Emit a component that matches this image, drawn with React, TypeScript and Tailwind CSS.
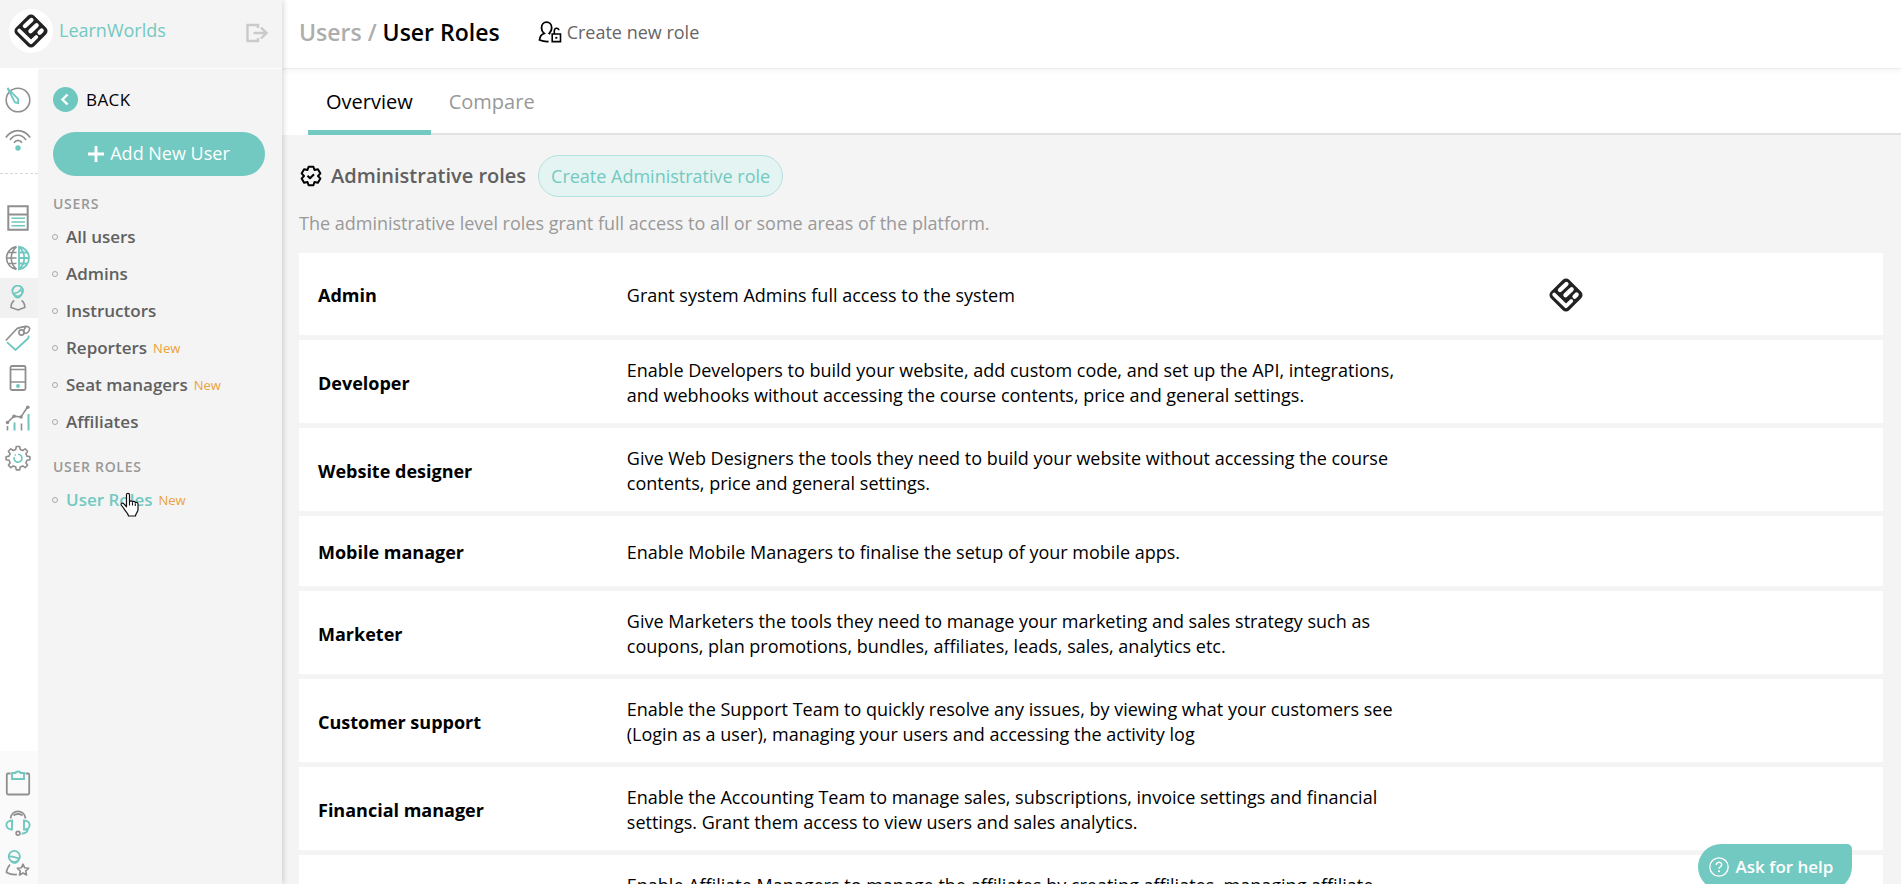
import React from 'react';

const G = '#8f8f8f';
const T = '#6fc8c0';

function Logo({ className }: { className: string }) {
  return (
    <svg viewBox="0 0 36 36" className={className} fill="none" aria-hidden="true">
      <rect x="5" y="5" width="26" height="26" rx="4.500" transform="rotate(45 18 18)" fill="#222" />
      <g stroke="#fff" strokeLinecap="round" strokeLinejoin="round">
        <path d="M12 13 18.400 7" strokeWidth="4.400" />
        <path d="M17.500 18.200 23.600 12.300" strokeWidth="4.400" />
        <path d="M26.600 19.600 28.600 17.600" strokeWidth="4.400" />
        <path d="M6.200 17.600 18 29.200 23.300 24" strokeWidth="3.800" />
      </g>
    </svg>
  );
}

function RailSvg({ children }: { children: React.ReactNode }) {
  return (
    <svg viewBox="0 0 26 26" className="size-[26px]" fill="none" stroke={G} strokeWidth="1.6" aria-hidden="true">
      {children}
    </svg>
  );
}

const star = 'M18 14.200l1.700 3.600 3.900.5-2.900 2.700.8 4-3.500-2-3.500 2 .8-4-2.900-2.700 3.900-.5z';

const railTop = [
  {
    label: 'Dashboard',
    icon: (
      <RailSvg>
        <circle cx="13" cy="13" r="11.800" />
        <path d="M2.500 1 13.200 12.200v4L10 15.500z" stroke={T} strokeWidth="1.800" fill="#fff" />
      </RailSvg>
    ),
  },
  {
    label: 'Live',
    icon: (
      <RailSvg>
        <path d="M.8 10.500C7.500 1.300 18.500 1.300 25.200 10.500M5 13c4.500-6.300 11.500-6.300 16 0M9 15.800c2.200-3.200 5.800-3.200 8 0" />
        <circle cx="13" cy="21" r="2.700" fill={T} stroke="none" />
      </RailSvg>
    ),
  },
];

const railMain = [
  {
    label: 'Courses',
    icon: (
      <RailSvg>
        <path d="M3.300 1.300h19.400v23.400H3.300zM3.300 9.500h19.400" strokeWidth="2" />
        <path d="M6.500 13.300h13.500M6.500 17h13.500M6.500 20.700h13.500" stroke={T} />
      </RailSvg>
    ),
  },
  {
    label: 'Website',
    icon: (
      <RailSvg>
        <path d="M11.500 1.600a11.500 11.500 0 0 0 0 22.800M11.500 1.600C4.500 8 4.500 18 11.500 24.400M1.500 13h10M3.500 7.500h8M3.500 18.500h8" />
        <path d="M14 1.600a11.500 11.500 0 0 1 0 22.800zM14 1.600c7 6.400 7 16.400 0 22.800M14 13h10.500M14 7.500h9M14 18.500h9" stroke={T} strokeWidth="1.800" />
      </RailSvg>
    ),
  },
  {
    label: 'Users',
    active: true,
    icon: (
      <RailSvg>
        <circle cx="12.700" cy="6" r="5.300" stroke={T} strokeWidth="1.800" />
        <path d="M8.500 8.500c2.500-.2 5.500-1.300 7-3.800l2 3.500M9.200 9.500c.6 1.800 2 3.200 3.500 3.200s3-1.400 3.600-3.200" stroke={T} />
        <path d="M9.200 15.500C7 17 6 20 6 22.500l7 2.500 6.800-2.500c0-2.500-1-5.500-3.200-7" />
      </RailSvg>
    ),
  },
  {
    label: 'Marketing',
    icon: (
      <RailSvg>
        <path d="M.8 15.500 12 3.600c2-1.200 5-1.600 8.500-2.200 3.800-.5 5 2 3.300 4.700-1.500 2.400-4.300 3-5 1.200-.7-1.700.6-3.600 2-5.300" />
        <circle cx="16.500" cy="7.500" r="2.600" />
        <path d="M2 17.200 10.500 25 23.500 13V10.500" stroke={T} strokeWidth="1.800" />
      </RailSvg>
    ),
  },
  {
    label: 'Mobile app',
    icon: (
      <RailSvg>
        <rect x="5.500" y="1" width="15" height="24" rx="1.500" strokeWidth="1.800" />
        <path d="M5.500 4.500h15M5.500 17h15" />
        <circle cx="13" cy="21" r="2" fill={T} stroke="none" />
      </RailSvg>
    ),
  },
  {
    label: 'Reports',
    icon: (
      <RailSvg>
        <path d="M2.500 17.500 9 11.200l7 .8 6.500-10" />
        <g fill={G} stroke="none">
          <circle cx="2.500" cy="17.500" r="1.800" />
          <circle cx="9" cy="11.200" r="1.800" />
          <circle cx="16" cy="12" r="1.800" />
          <circle cx="22.800" cy="2.200" r="1.800" />
        </g>
        <path d="M2.500 21v4.500M16.500 18.500v7" />
        <path d="M9.500 17.500v8M23.500 9v16.500" stroke={T} strokeWidth="2" />
      </RailSvg>
    ),
  },
  {
    label: 'Settings',
    icon: (
      <RailSvg>
        <path
          d="M11.300 1.500h3.400l.6 3 2.400 1 2.500-1.700 2.400 2.400-1.700 2.500 1 2.400 3 .6v3l-3 .6-1 2.400 1.700 2.500-2.400 2.400-2.500-1.700-2.400 1-.6 3h-3.400l-.6-3-2.400-1-2.500 1.700-2.400-2.400 1.700-2.500-1-2.400-3-.6v-3l3-.6 1-2.400-1.700-2.500 2.400-2.400 2.500 1.700 2.400-1z"
          strokeLinejoin="round"
        />
        <path d="M13 9.200a4 4 0 1 1-3.800 2.700M9.800 10.500a4 4 0 0 1 1-.9" stroke={T} />
      </RailSvg>
    ),
  },
];

const railBottom = [
  {
    label: 'My account',
    icon: (
      <RailSvg>
        <path d="M5.500 3.500H3A1.200 1.200 0 0 0 1.800 4.700v18.600c0 .8.5 1.200 1.200 1.200h20c.8 0 1.200-.5 1.200-1.200V4.700c0-.7-.4-1.200-1.200-1.200h-2.500" strokeWidth="1.800" />
        <path d="M7 3h3.500c0-2 5-2 5 0H19v6H7z" stroke={T} strokeWidth="1.900" />
      </RailSvg>
    ),
  },
  {
    label: 'Need help?',
    icon: (
      <RailSvg>
        <path d="M5.500 8.500c1-9.500 14-9.500 15 0M8.500 5.500c2-2 7-2 9 0" strokeWidth="1.800" />
        <path d="M7 10.500v9c-7.500 0-7.500-9 0-9zM19 10.500v9c7.500 0 7.500-9 0-9zM23 18c0 4-2.500 5.500-6.500 5.700" stroke={T} strokeWidth="1.900" />
        <circle cx="13" cy="23.300" r="1.900" />
      </RailSvg>
    ),
  },
  {
    label: 'Become a partner',
    icon: (
      <RailSvg>
        <circle cx="9.300" cy="6.500" r="5.600" stroke={T} strokeWidth="1.800" />
        <path d="M4 6.500c4-.5 6.500 1.500 10.500 2M6 10.500c1 3 5.500 3.500 7.500-.5" stroke={T} strokeWidth="1.800" />
        <path d="M5 14.500C3 17 1.500 20 1.500 22.500c3 1.500 7 2.500 10.500 2" />
        <path d={star} strokeLinejoin="round" />
      </RailSvg>
    ),
  },
];

function RailItem({ label, active, icon }: { label: string; active?: boolean; icon: React.ReactNode }) {
  return (
    <a
      href="#"
      aria-label={label}
      className={
        active
          ? 'flex h-[40px] items-center justify-center bg-[#f1f1f1] pr-[2px]'
          : 'flex h-[40px] items-center justify-center pr-[2px]'
      }
    >
      {icon}
    </a>
  );
}

const userLinks = [
  { label: 'All users' },
  { label: 'Admins' },
  { label: 'Instructors' },
  { label: 'Reporters', isNew: true },
  { label: 'Seat managers', isNew: true },
  { label: 'Affiliates' },
];

function NavItem({ label, isNew, active }: { label: string; isNew?: boolean; active?: boolean }) {
  return (
    <li className="relative flex h-[37px] items-center">
      <span className="mr-[8px] -ml-px size-[6px] rounded-full border border-[#a8a8a8]" />
      <a
        href="#"
        className={active ? 'text-[17px] font-semibold text-[#72c9c1]' : 'text-[17px] font-semibold text-[#606060]'}
      >
        {label}
      </a>
      {isNew && <span className="ml-[6px] pt-[2px] text-[13px] text-[#eba13c]">New</span>}
      {active && (
        <svg viewBox="0 0 20 26" className="absolute top-[10px] left-[67px] h-[26px] w-[20px]" aria-hidden="true">
          <path
            d="M6.500 2.800c0-2 3-2 3 0v7c.5-1.300 2.700-1.200 3 .2.700-1 2.600-.8 2.800.7.900-.8 2.700-.2 2.700 1.400v5.500c0 3-2.500 3.400-2.500 6.400h-7c-.5-3-3.500-5-4.500-7.300L1.200 13c-.5-1.700 1.600-2.600 2.700-1.200l2.600 3z"
            fill="#fff"
            stroke="#111"
            strokeWidth="1.200"
            strokeLinejoin="round"
          />
          <path d="M9.500 9.500v4M12.500 10.500v3M15.300 11.500v2.500" stroke="#111" strokeWidth="1.100" />
        </svg>
      )}
    </li>
  );
}

const roles = [
  { name: 'Admin', text: 'Grant system Admins full access to the system', logo: true },
  {
    name: 'Developer',
    text: 'Enable Developers to build your website, add custom code, and set up the API, integrations, and webhooks without accessing the course contents, price and general settings.',
  },
  {
    name: 'Website designer',
    text: 'Give Web Designers the tools they need to build your website without accessing the course contents, price and general settings.',
  },
  { name: 'Mobile manager', text: 'Enable Mobile Managers to finalise the setup of your mobile apps.' },
  {
    name: 'Marketer',
    text: 'Give Marketers the tools they need to manage your marketing and sales strategy such as coupons, plan promotions, bundles, affiliates, leads, sales, analytics etc.',
  },
  {
    name: 'Customer support',
    text: 'Enable the Support Team to quickly resolve any issues, by viewing what your customers see (Login as a user), managing your users and accessing the activity log',
  },
  {
    name: 'Financial manager',
    text: 'Enable the Accounting Team to manage sales, subscriptions, invoice settings and financial settings. Grant them access to view users and sales analytics.',
  },
  {
    name: 'Affiliate manager',
    text: 'Enable Affiliate Managers to manage the affiliates by creating affiliates, managing affiliate commissions and handling their payments.',
  },
];

export default function App() {
  return (
    <div className="flex h-screen overflow-hidden bg-[#f4f4f4] font-['Open_Sans',sans-serif] text-black">
      <aside className="relative z-10 flex w-[282px] shrink-0 flex-col bg-[#f4f4f4] shadow-[1px_0_6px_rgba(0,0,0,0.18)]">
        <div className="flex h-[69px] shrink-0 items-center border-b border-white pr-[14px] pb-[7px] pl-[9px]">
          <span className="flex size-[44px] items-center justify-center rounded-full bg-white">
            <Logo className="size-[36px]" />
          </span>
          <a href="#" className="ml-[6px] text-[18px] text-[#72c9c1]">
            LearnWorlds
          </a>
          <button type="button" aria-label="Log out" className="mt-[4px] ml-auto">
            <svg viewBox="0 0 22 20" className="h-[20px] w-[22px]" fill="none" stroke="#cacaca" strokeWidth="2.400" aria-hidden="true">
              <path d="M12 5V2H1.500v16H12v-3M7.500 10H20M15 4.500l5.500 5.500-5.500 5.500" />
            </svg>
          </button>
        </div>
        <div className="flex min-h-0 flex-1">
          <nav aria-label="Main" className="flex w-[38px] shrink-0 flex-col bg-white pt-[11px]">
            {railTop.map((i) => (
              <RailItem key={i.label} {...i} />
            ))}
            <div className="mt-[13px] mb-[24px] border-t border-dashed border-[#d8d8d8]" />
            {railMain.map((i) => (
              <RailItem key={i.label} {...i} />
            ))}
            <div className="mt-auto bg-[#fafafa] pt-[12px] pb-px">
              {railBottom.map((i) => (
                <RailItem key={i.label} {...i} />
              ))}
            </div>
          </nav>
          <nav aria-label="Users" className="flex-1 px-[15px] pt-[18px]">
            <a href="#" className="flex items-center gap-[8px] text-[17px] font-medium tracking-wide">
              <svg viewBox="0 0 25 25" className="size-[25px]" aria-hidden="true">
                <circle cx="12.500" cy="12.500" r="12.500" fill={T} />
                <path d="M14.500 7.500 9.500 12.500l5 5" fill="none" stroke="#fff" strokeWidth="2.400" />
              </svg>
              BACK
            </a>
            <button
              type="button"
              className="mt-[19px] flex h-[44px] w-[212px] items-center justify-center gap-[6px] rounded-full bg-[#72c9c1] text-[18px] text-white"
            >
              <svg viewBox="0 0 16 16" className="size-[16px]" stroke="#fff" strokeWidth="2.800" aria-hidden="true">
                <path d="M8 0v16M0 8h16" />
              </svg>
              Add New User
            </button>
            <h2 className="mt-[18px] text-[14px] leading-[20px] font-semibold tracking-wider text-[#999]">USERS</h2>
            <ul className="pt-[5px]">
              {userLinks.map((l) => (
                <NavItem key={l.label} {...l} />
              ))}
            </ul>
            <h2 className="mt-[16px] text-[14px] leading-[20px] font-semibold tracking-wider text-[#999]">USER ROLES</h2>
            <ul className="pt-[5px]">
              <NavItem label="User Roles" isNew active />
            </ul>
          </nav>
        </div>
      </aside>

      <main className="flex min-w-0 flex-1 flex-col">
        <header className="relative flex h-[69px] shrink-0 items-center border-b border-[#eee] bg-white pb-[4px] pl-[17px] shadow-[0_2px_5px_rgba(0,0,0,0.05)]">
          <h1 className="text-[23px] font-semibold">
            <a href="#" className="text-[#adadad]">
              Users
            </a>
            <span className="text-[#adadad]"> / </span>
            User Roles
          </h1>
          <button type="button" className="ml-[38px] flex items-center gap-[5px] text-[18px] text-[#666]">
            <svg viewBox="0 0 24 22" className="h-[22px] w-[24px]" fill="none" stroke="#000" strokeWidth="1.800" aria-hidden="true">
              <path d="M10.500 20.500C7 20.800 4 20 1.500 19c.3-3.500 1.700-5.500 4.700-6.500C4.500 11 3.500 9 3.500 7c0-7.800 10.200-7.800 10.200 0 0 2-.9 3.800-2.400 5.300l1 .6" />
              <path d="M14.200 13h8.300v7.600h-8.300zM16.300 13V9.800c0-3.300 4.300-3.300 4.500-.5" strokeWidth="1.600" />
              <path d="M17.300 16.800h2" />
            </svg>
            Create new role
          </button>
        </header>
        <div className="shrink-0 bg-white pl-[26px]">
          <div role="tablist" className="flex h-[66px] border-b-2 border-[#e2e2e2] text-[20px]">
            <button type="button" role="tab" aria-selected="true" className="-mb-[2px] h-[66px] border-b-[5px] border-[#72c9c1] px-[18px] pt-[5px]">
              Overview
            </button>
            <button type="button" role="tab" aria-selected="false" className="-mb-[2px] h-[66px] border-b-[5px] border-transparent px-[18px] pt-[5px] text-[#999]">
              Compare
            </button>
          </div>
        </div>

        <section className="min-h-0 flex-1 overflow-hidden pt-[20px] pr-[18px] pl-[17px]">
          <div className="flex items-center">
            <svg viewBox="0 0 24 24" className="size-[24px]" fill="none" stroke="#000" strokeWidth="2" strokeLinejoin="round" aria-hidden="true">
              <path d="M9.600 2.700h4.800l1.100 3.300 3.400-.8 2.500 4.200L19 12l2.400 2.600-2.500 4.200-3.400-.8-1.100 3.300H9.600L8.500 18l-3.400.8-2.500-4.200L5 12 2.600 9.400l2.500-4.200 3.400.8z" />
              <path d="M8.500 11.800 11 14.300l4-4" />
            </svg>
            <h2 className="ml-[8px] text-[20px] font-semibold text-[#606060]">Administrative roles</h2>
            <button
              type="button"
              className="ml-[12px] h-[42px] rounded-full border border-[#b3e1dd] bg-[#e4f4f2] px-[12px] text-[18px] text-[#72c9c1]"
            >
              Create Administrative role
            </button>
          </div>
          <p className="mt-[13px] text-[18px] leading-[26px] text-[#999]">
            The administrative level roles grant full access to all or some areas of the platform.
          </p>
          <table className="mt-[17px] w-full table-fixed border-collapse text-[18px] leading-[25px]">
            <colgroup>
              <col className="w-[20%]" />
              <col className="w-[50%]" />
              <col className="w-[20%]" />
              <col className="w-[10%]" />
            </colgroup>
            <tbody>
              {roles.map((r) => (
                <tr key={r.name} className="border-b-[5px] border-[#f4f4f4] bg-white">
                  <th scope="row" className="pt-[24px] pb-[21px] pl-[19px] text-left font-bold">
                    {r.name}
                  </th>
                  <td className="pt-[18px] pr-[8px] pb-[15px] pl-[11px]">{r.text}</td>
                  <td className="text-center">{r.logo && <Logo className="mt-[24px] mb-[22px] inline-block size-[36px]" />}</td>
                  <td />
                </tr>
              ))}
            </tbody>
          </table>
        </section>
      </main>

      <button
        type="button"
        className="fixed right-[49px] -bottom-[6px] z-20 flex h-[46px] w-[154px] items-center justify-center gap-[7px] rounded-[23px] rounded-tr-[5px] bg-[#72c9c1] pr-[8px] text-[17px] font-semibold text-white"
      >
        <svg viewBox="0 0 20 20" className="size-[20px] shrink-0" fill="none" stroke="#fff" strokeWidth="1.300" aria-hidden="true">
          <circle cx="10" cy="10" r="9.200" />
          <path d="M7.300 8c0-3.500 5.400-3.500 5.400-.2 0 1.900-2.700 2-2.700 4" strokeWidth="1.500" />
          <circle cx="10" cy="14.300" r="1" fill="#fff" stroke="none" />
        </svg>
        Ask for help
      </button>
    </div>
  );
}
